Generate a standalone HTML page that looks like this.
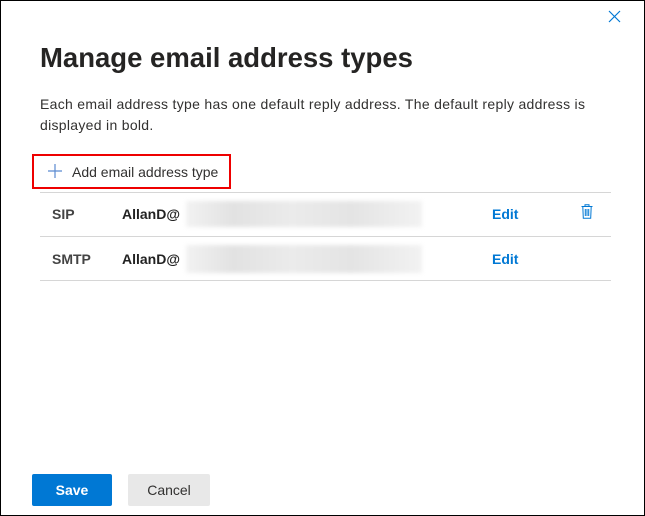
<!DOCTYPE html>
<html><head><style>
*{margin:0;padding:0;box-sizing:border-box}
body{width:645px;height:516px;position:relative;background:#fff;font-family:"Liberation Sans",sans-serif;color:#323130;overflow:hidden}
.frame{position:absolute;left:0;top:0;width:645px;height:516px;border:1px solid #000}
.a{position:absolute;white-space:nowrap}
.line{position:absolute;left:40px;width:571px;height:1px;background:#d6d6d6}
.blur{position:absolute;background:linear-gradient(90deg,#f2f2f2,#e2e2e2 20%,#ebebeb 45%,#e4e4e4 70%,#f2f2f2);filter:blur(2px)}
.btn{position:absolute;top:474px;height:32px;border-radius:2px;font-size:14px;font-weight:bold;text-align:center;line-height:32px}
</style></head><body>
<div class="frame"></div>
<svg class="a" style="left:608px;top:10px" width="13" height="13" viewBox="0 0 13 13"><path d="M1 1L12 12M12 1L1 12" stroke="#0078d4" stroke-width="1.2"/></svg>
<div class="a" style="left:40px;top:42px;font-size:27.5px;font-weight:bold;color:#252423">Manage email address types</div>
<div class="a" style="left:40px;top:94px;font-size:14px;line-height:21px;white-space:normal;width:580px;letter-spacing:0.3px">Each email address type has one default reply address. The default reply address is displayed in bold.</div>
<div class="a" style="left:32px;top:154px;width:199px;height:35px;border:2px solid #e00"></div>
<svg class="a" style="left:48px;top:164px" width="14" height="14" viewBox="0 0 14 14"><path d="M7 0V14M0 7H14" stroke="#5a8ad0" stroke-width="1.2"/></svg>
<div class="a" style="left:72px;top:164px;font-size:14px">Add email address type</div>
<div class="line" style="top:192px"></div>
<div class="a" style="left:52px;top:206px;font-size:14px;font-weight:bold;color:#444">SIP</div>
<div class="a" style="left:122px;top:206px;font-size:14px;font-weight:bold;color:#222">AllanD@</div>
<div class="blur" style="left:186px;top:201px;width:236px;height:26px"></div>
<div class="a" style="left:492px;top:206px;font-size:14px;font-weight:bold;color:#0078d4">Edit</div>
<svg class="a" style="left:581px;top:204px" width="12" height="15" viewBox="0 0 12 15"><path d="M0.5 2.5H11.5M4 2.5V0.8H8V2.5M1.8 2.5L2.3 14.3H9.7L10.2 2.5M4.3 5V12M6 5V12M7.7 5V12" stroke="#0078d4" fill="none" stroke-width="1"/></svg>
<div class="line" style="top:236px"></div>
<div class="a" style="left:52px;top:251px;font-size:14px;font-weight:bold;color:#444">SMTP</div>
<div class="a" style="left:122px;top:251px;font-size:14px;font-weight:bold;color:#222">AllanD@</div>
<div class="blur" style="left:186px;top:245px;width:236px;height:28px"></div>
<div class="a" style="left:492px;top:251px;font-size:14px;font-weight:bold;color:#0078d4">Edit</div>
<div class="line" style="top:280px"></div>
<div class="btn" style="left:32px;width:80px;background:#0078d4;color:#fff">Save</div>
<div class="btn" style="left:128px;width:82px;background:#e8e8e8;color:#323130;font-weight:normal">Cancel</div>
</body></html>
